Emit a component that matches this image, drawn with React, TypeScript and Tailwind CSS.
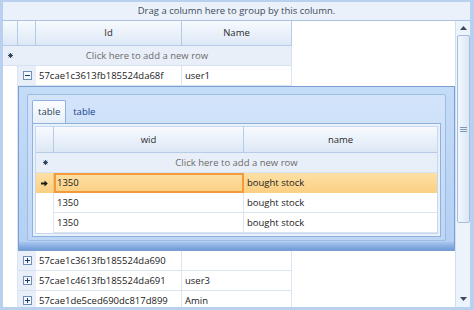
import React from 'react'

const hdr = 'bg-gradient-to-b from-[#f7fafe] to-[#dde8f6]'

function Expander({ open }: { open: boolean }) {
  return (
    <svg width="9" height="9" viewBox="0 0 9 9">
      <rect x="0.5" y="0.5" width="8" height="8" fill="#f4f8fd" stroke="#6f8fb8" />
      <path d="M2 4.5h5" stroke="#1f3a60" />
      {!open && <path d="M4.5 2v5" stroke="#1f3a60" />}
    </svg>
  )
}

// small asterisk used by the "new row" indicator
function Star() {
  return (
    <svg width="5" height="5" viewBox="0 0 5 5">
      <path d="M2.5 0v5M0 2.5h5M0.7 0.7l3.6 3.6M4.3 0.7L0.7 4.3" stroke="#33465f" strokeWidth="1" />
    </svg>
  )
}

function Arrow() {
  return (
    <svg width="7" height="7" viewBox="0 0 7 7">
      <path d="M0 2.5h3.5V0.5L6.8 3.5 3.5 6.5V4.5H0z" fill="#1a1a1a" />
    </svg>
  )
}

function MasterRow({ id, name, open = false }: { id: string; name: string; open?: boolean }) {
  return (
    <div className="flex h-[20px] shrink-0">
      <div className="w-[15px] border-r border-[#dbe5f1] bg-white" />
      <div className="flex w-[18px] items-center justify-center border-b border-[#d6e2f0] bg-[#e8eff8]">
        <Expander open={open} />
      </div>
      <div className="flex w-[146px] items-center border-b border-r border-[#dbe5f1] pl-[3px] text-[#1a1a1a]">{id}</div>
      <div className="flex w-[110px] items-center border-b border-r border-[#dbe5f1] pl-[3px] text-[#1a1a1a]">{name}</div>
      <div className="flex-1 bg-white" />
    </div>
  )
}

function DetailRow({ wid, name, current = false }: { wid: string; name: string; current?: boolean }) {
  if (current) {
    return (
      <div className="flex h-[20px] bg-gradient-to-b from-[#fde0a6] to-[#fbcf82]">
        <div className="flex w-[18px] items-center justify-center border-r border-[#f3c47a]">
          <Arrow />
        </div>
        <div className="flex w-[190px] items-center border-2 border-[#f39a3a] pl-[1px] text-[#1a1a1a]">{wid}</div>
        <div className="flex flex-1 items-center pl-[3px] text-[#1a1a1a]">{name}</div>
      </div>
    )
  }
  return (
    <div className="flex h-[20px] bg-white">
      <div className="w-[18px] border-r border-[#dbe5f1]" />
      <div className="flex w-[190px] items-center border-b border-r border-[#dbe5f1] pl-[3px] text-[#1a1a1a]">{wid}</div>
      <div className="flex flex-1 items-center border-b border-[#dbe5f1] pl-[3px] text-[#1a1a1a]">{name}</div>
    </div>
  )
}

function Detail() {
  return (
    <div className="flex h-[165px] shrink-0">
      <div className="w-[15px] border-r border-[#dbe5f1] bg-white" />
      <div className="flex flex-1 flex-col border border-[#7a9fd2] bg-gradient-to-b from-[#c5dcf8] to-[#b3cff3] px-[8px] pt-[7px]">
        <div className="flex flex-1 flex-col rounded-[2px] border border-[#9cbce6] bg-gradient-to-b from-[#d3e4fa] to-[#bed6f5] px-[4px] pt-[5px]">
          {/* tabs */}
          <div className="flex h-[23px] items-end">
            <div className="flex h-[23px] items-center rounded-t-[2px] border border-b-0 border-[#8eb1de] bg-gradient-to-b from-[#fbfdff] to-[#e6effa] px-[5px] text-[#2c3e5a]">table</div>
            <div className="flex h-[23px] items-center px-[7px] text-[#15428b]">table</div>
          </div>
          {/* inner grid */}
          <div className="flex flex-col border border-[#8eb1de] bg-[#e9f1fb] p-[2px]">
            <div className="flex flex-col border border-[#c7d8ee] bg-white">
              <div className="flex h-[26px] text-[#2b2b2b]">
                <div className={`w-[18px] border-r border-b border-[#b6cbe5] ${hdr}`} />
                <div className={`flex w-[190px] items-center justify-center border-r border-b border-[#b6cbe5] ${hdr}`}>wid</div>
                <div className={`flex flex-1 items-center justify-center border-b border-[#b6cbe5] ${hdr}`}>name</div>
              </div>
              <div className="flex h-[20px] items-center border-b border-[#d6e2f0] bg-[#e8eff8]">
                <div className="flex w-[18px] items-center justify-center"><Star /></div>
                <div className="flex flex-1 justify-center pr-[18px] text-[#6b6b6b]">Click here to add a new row</div>
              </div>
              <DetailRow wid="1350" name="bought stock" current />
              <DetailRow wid="1350" name="bought stock" />
              <DetailRow wid="1350" name="bought stock" />
            </div>
          </div>
          <div className="flex-1" />
        </div>
        <div className="-mx-[8px] mt-[1px] h-[8px] bg-gradient-to-b from-[#a7c6ee] to-[#6f9bd6]" />
      </div>
    </div>
  )
}

function Scrollbar() {
  return (
    <div className="flex w-[15px] flex-col items-center border-l border-[#d3e0f0] bg-[#edf3fb]">
      <div className="flex h-[14px] w-full items-center justify-center">
        <svg width="7" height="4" viewBox="0 0 7 4"><path d="M3.5 0L7 4H0z" fill="#3b4a5e" /></svg>
      </div>
      <div className="flex h-[188px] w-[13px] items-center justify-center rounded-[2px] border border-[#a6bedd] bg-gradient-to-r from-[#f2f7fd] to-[#dbe7f6]">
        <svg width="7" height="5" viewBox="0 0 7 5">
          <path d="M0 0.5h7M0 2.5h7M0 4.5h7" stroke="#7f97b8" />
        </svg>
      </div>
      <div className="flex-1" />
      <div className="flex h-[16px] w-full items-center justify-center">
        <svg width="7" height="4" viewBox="0 0 7 4"><path d="M0 0h7L3.5 4z" fill="#3b4a5e" /></svg>
      </div>
    </div>
  )
}

export default function App() {
  return (
    <div className="h-[310px] w-[474px] overflow-hidden bg-white font-['Open_Sans',sans-serif] text-[9.5px] leading-none">
      <div className="flex h-full flex-col border-x-[3px] border-t-[2px] border-b-[3px] border-r-[4px] border-[#b9d0ee]">
        {/* group panel */}
        <div className="flex h-[19px] shrink-0 items-center justify-center border-b border-[#a9c2e2] bg-[#eaf1fa] text-[#3f4b5b]">
          Drag a column here to group by this column.
        </div>
        <div className="flex min-h-0 flex-1">
          <div className="flex min-w-0 flex-1 flex-col overflow-hidden">
            {/* header */}
            <div className="flex h-[25px] shrink-0 text-[#2b2b2b]">
              <div className={`w-[15px] border-r border-b border-[#b6cbe5] ${hdr}`} />
              <div className={`w-[18px] border-r border-b border-[#b6cbe5] ${hdr}`} />
              <div className={`flex w-[146px] items-center justify-center border-r border-b border-[#b6cbe5] ${hdr}`}>Id</div>
              <div className={`flex w-[110px] items-center justify-center border-r border-b border-[#b6cbe5] ${hdr}`}>Name</div>
              <div className="flex-1 bg-white" />
            </div>
            {/* new row */}
            <div className="flex h-[20px] shrink-0">
              <div className="flex w-[289px] items-center border-b border-r border-[#d6e2f0] bg-[#e8eff8]">
                <div className="flex w-[15px] items-center justify-center"><Star /></div>
                <div className="flex flex-1 justify-center pr-[15px] text-[#6b6b6b]">Click here to add a new row</div>
              </div>
              <div className="flex-1 bg-white" />
            </div>
            <MasterRow id="57cae1c3613fb185524da68f" name="user1" open />
            <Detail />
            <MasterRow id="57cae1c3613fb185524da690" name="" />
            <MasterRow id="57cae1c4613fb185524da691" name="user3" />
            <MasterRow id="57cae1de5ced690dc817d899" name="Amin" />
          </div>
          <Scrollbar />
        </div>
      </div>
    </div>
  )
}
